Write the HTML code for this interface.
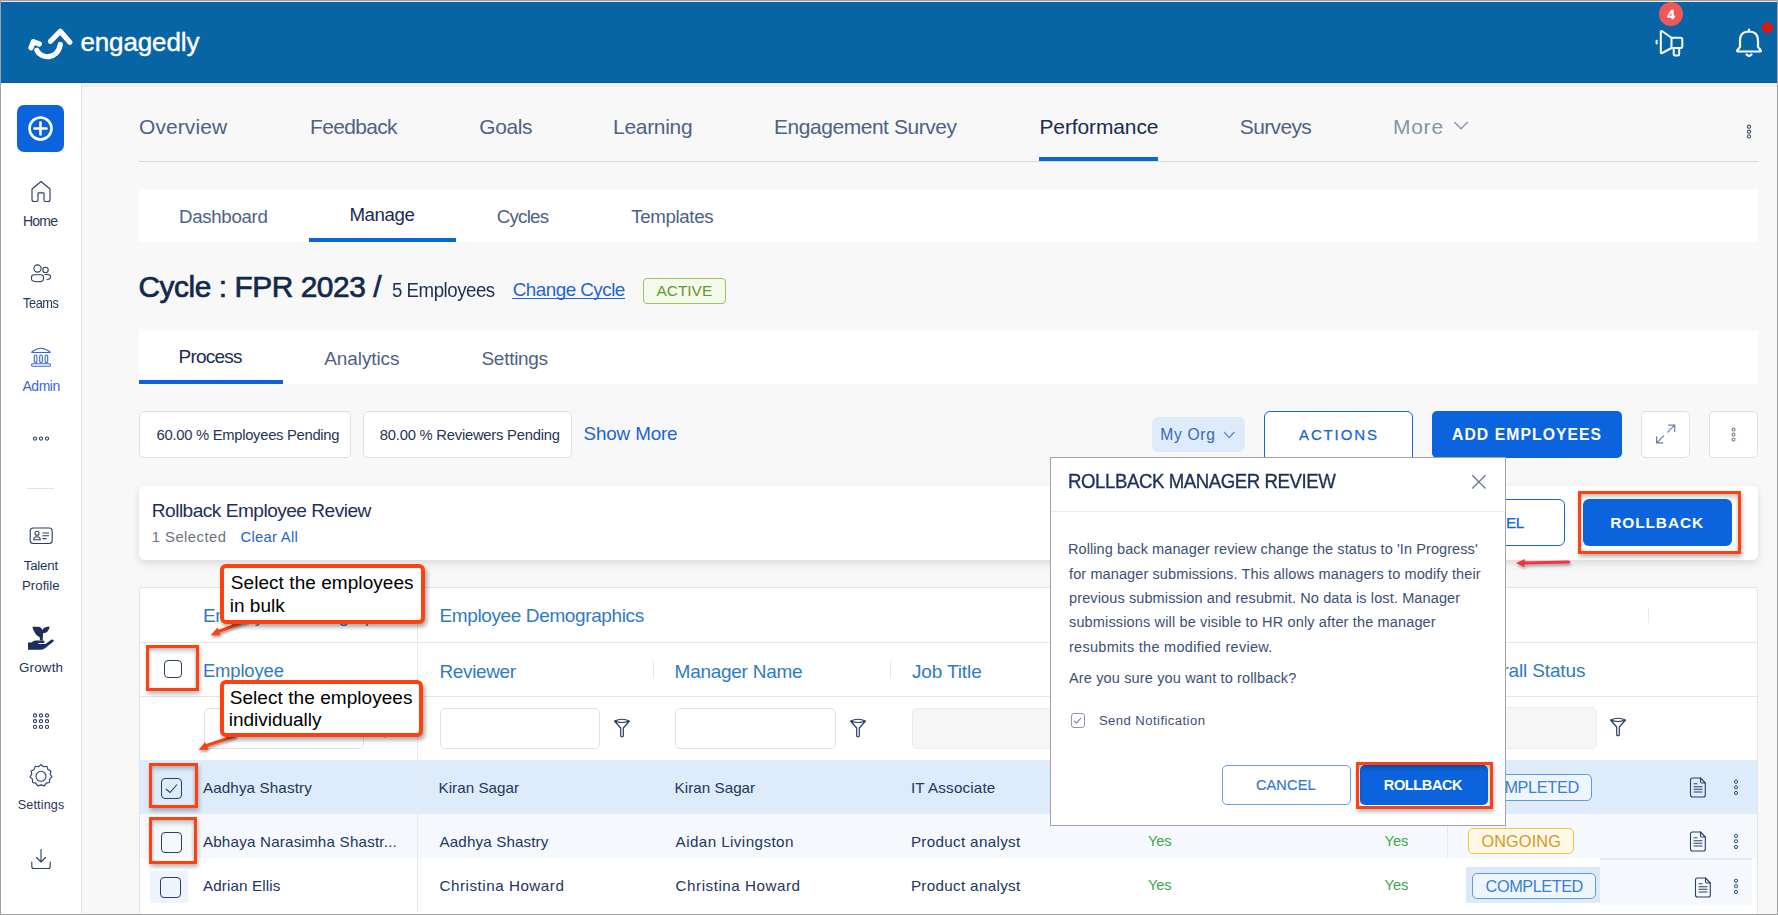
<!DOCTYPE html>
<html><head><meta charset="utf-8"><style>
html,body{margin:0;padding:0;width:1778px;height:915px;overflow:hidden;background:#f8f8f8;}
body{position:relative;font-family:"Liberation Sans", sans-serif;}
.t{position:absolute;white-space:nowrap;font-family:"Liberation Sans", sans-serif;}
</style></head><body>
<div style="position:absolute;left:0px;top:0px;width:1778px;height:915px;box-sizing:border-box;background:#f8f8f8;"></div><div style="position:absolute;left:0px;top:0px;width:1778px;height:83px;box-sizing:border-box;background:#0865a5;"></div><div style="position:absolute;left:0px;top:82px;width:1778px;height:1px;box-sizing:border-box;background:#08599a;"></div><div style="position:absolute;left:0px;top:83px;width:82px;height:832px;box-sizing:border-box;background:#fff;border-right:1px solid #e4e4e4;"></div><div style="position:absolute;left:82px;top:83px;width:1696px;height:1px;box-sizing:border-box;background:#f7f5f0;"></div><div style="position:absolute;left:82px;top:84px;width:1696px;height:3px;box-sizing:border-box;background:#eceeee;"></div><svg style="position:absolute;left:0;top:0" width="100" height="83" viewBox="0 0 100 83">
<g fill="none" stroke="#fff" stroke-width="5.2" stroke-linecap="round" stroke-linejoin="round">
<path d="M50.5 41.3 L60.3 31.3 L69.8 42.2"/>
<path d="M36.8 50.3 C40.5 59 57.5 60.5 60.3 44.5"/>
<path d="M31 47.8 L33.3 41.8 L39.3 44"/>
</g></svg><svg style="position:absolute;left:1650px;top:25px" width="40" height="36" viewBox="0 0 40 36">
<g fill="none" stroke="#fff" stroke-width="2" stroke-linecap="round" stroke-linejoin="round">
<path d="M10.8 7 L10.8 27.2 Q10.8 28.8 12.2 28 L21.5 23 L21.5 12.8 L12.2 6.2 Q10.8 5.4 10.8 7 Z"/>
<path d="M21.5 12.8 L30.5 12.8 Q32.3 12.8 32.3 14.6 L32.3 21.2 Q32.3 23 30.5 23 L21.5 23"/>
<path d="M23.7 23 L23.7 29.3 Q23.7 30.6 25.2 30.6 L27.7 30.6 Q29.2 30.6 29.2 29.3 L29.2 23"/>
<path d="M6.6 15.8 L6.6 18.6"/>
</g></svg><div style="position:absolute;left:1659px;top:2px;width:24px;height:24px;border-radius:50%;background:#f05858;"></div><svg style="position:absolute;left:1732px;top:26px" width="34" height="34" viewBox="0 0 34 34">
<g fill="none" stroke="#fff" stroke-width="2.2" stroke-linecap="round" stroke-linejoin="round">
<path d="M17 3.5 L17 5.5"/>
<path d="M8 21 L8 14.5 Q8 5.5 17 5.5 Q26 5.5 26 14.5 L26 21 L28.5 24 Q29.5 25.5 28 25.5 L6 25.5 Q4.5 25.5 5.5 24 Z"/>
<path d="M14.5 28.5 Q17 31 19.5 28.5"/>
</g></svg><div style="position:absolute;left:1761.5px;top:21.8px;width:11px;height:11px;border-radius:50%;background:#e3160b;"></div><div style="position:absolute;left:17px;top:105px;width:47px;height:47px;box-sizing:border-box;background:#0b64dd;border-radius:7px;"></div><svg style="position:absolute;left:17px;top:105px" width="47" height="47" viewBox="0 0 47 47">
<g fill="none" stroke="#fff" stroke-width="2.6" stroke-linecap="round"><circle cx="23.5" cy="23.5" r="11"/><path d="M23.5 17.5 V29.5 M17.5 23.5 H29.5"/></g></svg><svg style="position:absolute;left:28px;top:178px" width="26" height="26" viewBox="0 0 26 26">
<path d="M4 11 L13 3.5 L22 11 L22 21.5 Q22 23.5 20 23.5 L17.5 23.5 Q16 23.5 16 22 L16 15.5 Q16 14.8 15.3 14.8 L10.7 14.8 Q10 14.8 10 15.5 L10 22 Q10 23.5 8.5 23.5 L6 23.5 Q4 23.5 4 21.5 Z" fill="none" stroke="#2a3f63" stroke-width="1.15" stroke-linejoin="round"/></svg><svg style="position:absolute;left:28px;top:262px" width="26" height="24" viewBox="0 0 26 24">
<g fill="none" stroke="#2a3f63" stroke-width="1.1"><circle cx="9.5" cy="6.5" r="3.6"/><circle cx="17.5" cy="8" r="2.7"/>
<path d="M6 12.8 L13 12.8 Q15.5 12.8 15.5 15.5 L15.5 17 Q15.5 19.8 10 19.8 Q3.5 19.8 3.5 17 L3.5 15.5 Q3.5 12.8 6 12.8 Z"/>
<path d="M16.5 12.5 L20 12.5 Q22.5 12.5 22.5 14.8 Q22.5 17.3 18.5 17.8"/></g></svg><svg style="position:absolute;left:28px;top:344px" width="26" height="26" viewBox="0 0 26 26">
<g fill="none" stroke="#3a66d8" stroke-width="1.1" stroke-linejoin="round"><path d="M3.8 8 Q13 0.5 22.2 8 L22.2 8.5 L3.8 8.5 Z"/>
<rect x="6.3" y="11" width="2.6" height="7.5" rx="1.3"/><rect x="11.7" y="11" width="2.6" height="7.5" rx="1.3"/><rect x="17.1" y="11" width="2.6" height="7.5" rx="1.3"/>
<rect x="3.5" y="19.8" width="19" height="2.4" rx="1.2"/></g></svg><svg style="position:absolute;left:30px;top:432px" width="22" height="14" viewBox="0 0 22 14">
<g fill="none" stroke="#2a3f63" stroke-width="1.1"><circle cx="5" cy="6.6" r="1.6"/><circle cx="11" cy="6.6" r="1.6"/><circle cx="17" cy="6.6" r="1.6"/></g></svg><div style="position:absolute;left:27px;top:488px;width:27px;height:1px;box-sizing:border-box;background:#e2e2e2;"></div><svg style="position:absolute;left:28px;top:524px" width="26" height="24" viewBox="0 0 26 24">
<g fill="none" stroke="#2a3f63" stroke-width="1.1"><rect x="2.2" y="4" width="22" height="15.5" rx="3"/>
<circle cx="9" cy="9.3" r="2"/><path d="M5.8 15.8 Q5.8 12.8 9 12.8 Q12.2 12.8 12.2 15.8 Z"/>
<path d="M14.5 9 H21 M14.5 11.8 H21 M14.5 14.6 H18.5"/></g></svg><svg style="position:absolute;left:26px;top:624px" width="30" height="28" viewBox="0 0 30 28">
<g fill="#1b2f5a"><path d="M6.3 2.8 L12 2.8 Q16.8 3.5 16.8 8.5 L16.8 14 Q9 13.5 6.3 2.8 Z"/><path d="M15.5 9.5 Q15.5 2.8 23.6 2.6 Q23.2 9.3 15.5 9.5 Z"/><rect x="13.8" y="8" width="3" height="8.5" rx="1"/>
<path d="M2 18.5 L2 25.8 L14.5 25.8 Q17 25.8 19 24.3 L27.5 17.5 Q28.5 16.3 27 15.8 Q25.5 15.3 24.5 16.2 L19.5 20 L12.5 20 L12.5 19 L17.2 19 Q18.5 19 18.5 17.7 Q18.5 16.5 17.2 16.5 L9.5 16.5 Q7.5 16.5 6 18 L5.2 18.5 Z"/></g></svg><svg style="position:absolute;left:30px;top:710px" width="22" height="22" viewBox="0 0 22 22">
<g fill="none" stroke="#2a3f63" stroke-width="1.1"><circle cx="5" cy="5.5" r="1.6"/><circle cx="11" cy="5.5" r="1.6"/><circle cx="17" cy="5.5" r="1.6"/>
<circle cx="5" cy="11.2" r="1.6"/><circle cx="11" cy="11.2" r="1.6"/><circle cx="17" cy="11.2" r="1.6"/>
<circle cx="5" cy="16.9" r="1.6"/><circle cx="11" cy="16.9" r="1.6"/><circle cx="17" cy="16.9" r="1.6"/></g></svg><svg style="position:absolute;left:27px;top:762px" width="28" height="28" viewBox="0 0 28 28">
<g fill="none" stroke="#2a3f63" stroke-width="1.1" stroke-linejoin="round">
<path d="M14 2.6 L16.6 4.7 L19.9 4.3 L20.9 7.4 L23.9 8.9 L23.2 12.2 L25 14.9 L22.6 17.1 L22.5 20.5 L19.2 21.1 L17.3 23.9 L14 22.9 L10.7 23.9 L8.8 21.1 L5.5 20.5 L5.4 17.1 L3 14.9 L4.8 12.2 L4.1 8.9 L7.1 7.4 L8.1 4.3 L11.4 4.7 Z"/>
<circle cx="14" cy="14.3" r="5"/></g></svg><svg style="position:absolute;left:28px;top:846px" width="26" height="26" viewBox="0 0 26 26">
<g fill="none" stroke="#2a3f63" stroke-width="1.1" stroke-linecap="round" stroke-linejoin="round">
<path d="M13 3.5 V16 M8.5 11.5 L13 16 L17.5 11.5"/><path d="M3.8 16 V20.5 Q3.8 22.5 5.8 22.5 H20.2 Q22.2 22.5 22.2 20.5 V16"/></g></svg><svg style="position:absolute;left:1450px;top:117px" width="22" height="16" viewBox="0 0 22 16"><path d="M4.3 5 L11 11.8 L17.7 5" fill="none" stroke="#8594ad" stroke-width="1.3"/></svg><div style="position:absolute;left:139px;top:161px;width:1620px;height:1px;box-sizing:border-box;background:#d9d9d9;"></div><div style="position:absolute;left:1039px;top:157px;width:119px;height:4px;box-sizing:border-box;background:#0b64dd;"></div><svg style="position:absolute;left:1742px;top:120px" width="14" height="22" viewBox="0 0 14 22"><g fill="none" stroke="#3b4e70" stroke-width="1.1">
<circle cx="7" cy="6.7" r="1.6"/><circle cx="7" cy="11.7" r="1.6"/><circle cx="7" cy="16.4" r="1.6"/></g></svg><div style="position:absolute;left:139px;top:189px;width:1619px;height:53px;box-sizing:border-box;background:#fff;"></div><div style="position:absolute;left:309px;top:238px;width:147px;height:4px;box-sizing:border-box;background:#0b64dd;"></div><div style="position:absolute;left:512px;top:297.5px;width:113px;height:1.5px;box-sizing:border-box;background:#1f63d9;"></div><div style="position:absolute;left:643px;top:278px;width:83px;height:26px;box-sizing:border-box;background:#f5f9ec;border:1px solid #96c75e;border-radius:4px;"></div><div style="position:absolute;left:139px;top:331px;width:1619px;height:53px;box-sizing:border-box;background:#fff;"></div><div style="position:absolute;left:139px;top:380px;width:144px;height:4px;box-sizing:border-box;background:#0b64dd;"></div><div style="position:absolute;left:139px;top:411px;width:212px;height:47px;box-sizing:border-box;background:#fff;border:1px solid #e1e1e1;border-radius:5px;"></div><div style="position:absolute;left:363px;top:411px;width:209px;height:47px;box-sizing:border-box;background:#fff;border:1px solid #e1e1e1;border-radius:5px;"></div><div style="position:absolute;left:1152px;top:417px;width:93px;height:35px;box-sizing:border-box;background:#deebfb;border-radius:6px;"></div><svg style="position:absolute;left:1220px;top:427px" width="18" height="16" viewBox="0 0 18 16"><path d="M4 5 L9.2 10.6 L14.4 5" fill="none" stroke="#5a85c0" stroke-width="1.2"/></svg><div style="position:absolute;left:1264px;top:411px;width:149px;height:59px;box-sizing:border-box;background:#fff;border:1.5px solid #1a62d8;border-radius:6px;"></div><div style="position:absolute;left:1432px;top:411px;width:190px;height:47px;box-sizing:border-box;background:#0b64dd;border-radius:5px;"></div><div style="position:absolute;left:1641px;top:411px;width:49px;height:47px;box-sizing:border-box;background:#fff;border:1px solid #e1e1e1;border-radius:5px;"></div><svg style="position:absolute;left:1641px;top:411px" width="49" height="47" viewBox="0 0 49 47"><g fill="none" stroke="#6c7f9c" stroke-width="1.2" stroke-linecap="round">
<path d="M26.7 21.2 L33.7 14.2 M27.5 14.2 H33.7 V20.4 M15.6 31.9 L22.7 24.8 M15.6 25.7 V31.9 H21.8"/></g></svg><div style="position:absolute;left:1709px;top:411px;width:49px;height:47px;box-sizing:border-box;background:#fff;border:1px solid #e1e1e1;border-radius:5px;"></div><svg style="position:absolute;left:1709px;top:411px" width="49" height="47" viewBox="0 0 49 47"><g fill="none" stroke="#6c7f9c" stroke-width="1.1">
<circle cx="24.5" cy="18.5" r="1.5"/><circle cx="24.5" cy="23.5" r="1.5"/><circle cx="24.5" cy="28.5" r="1.5"/></g></svg><div style="position:absolute;left:139px;top:486px;width:1619px;height:74px;box-sizing:border-box;background:#fff;border-radius:6px;box-shadow:0 3px 8px rgba(0,0,0,0.13);"></div><div style="position:absolute;left:1440px;top:499px;width:125px;height:47px;box-sizing:border-box;background:#fff;border:1.5px solid #1a62d8;border-radius:6px;"></div><div style="position:absolute;left:1583px;top:499px;width:149px;height:47px;box-sizing:border-box;background:#0b64dd;border-radius:6px;"></div><div style="position:absolute;left:1578px;top:491px;width:163px;height:63px;box-sizing:border-box;border:3px solid #fb4210;box-shadow:inset 0 4px 4px -1px rgba(0,0,0,0.22), inset 2px 0 3px -1px rgba(0,0,0,0.12), inset -2px 0 3px -1px rgba(0,0,0,0.12), 1px 3px 4px rgba(0,0,0,0.28);"></div><svg style="position:absolute;left:1505px;top:550px" width="80" height="25" viewBox="0 0 80 25"><g style="filter:drop-shadow(1px 2px 1.5px rgba(0,0,0,0.35))">
<path d="M63.5 12 L16 13" stroke="#f53538" stroke-width="3.2" stroke-linecap="round"/>
<path d="M11 13.1 L20 9 L19 17 Z" fill="#f53538"/></g></svg><div style="position:absolute;left:139px;top:587px;width:1619px;height:353px;box-sizing:border-box;background:#fff;border:1px solid #e4e4e4;border-radius:3px;"></div><div style="position:absolute;left:140px;top:642px;width:1617px;height:1px;box-sizing:border-box;background:#e6e6e6;"></div><div style="position:absolute;left:140px;top:696px;width:1617px;height:1px;box-sizing:border-box;background:#e6e6e6;"></div><div style="position:absolute;left:417px;top:587px;width:1px;height:325px;box-sizing:border-box;background:#ebebeb;"></div><div style="position:absolute;left:653px;top:661px;width:1px;height:17px;box-sizing:border-box;background:#e8e8e8;"></div><div style="position:absolute;left:890px;top:661px;width:1px;height:17px;box-sizing:border-box;background:#e8e8e8;"></div><div style="position:absolute;left:1648px;top:608px;width:1px;height:15px;box-sizing:border-box;background:#e8e8e8;"></div><div style="position:absolute;left:204px;top:707.5px;width:160px;height:41.0px;box-sizing:border-box;background:#fff;border:1px solid #e3e3e3;border-radius:5px;"></div><div style="position:absolute;left:439.5px;top:707.5px;width:160.0px;height:41.0px;box-sizing:border-box;background:#fff;border:1px solid #e3e3e3;border-radius:5px;"></div><div style="position:absolute;left:675px;top:707.5px;width:161px;height:41.0px;box-sizing:border-box;background:#fff;border:1px solid #e3e3e3;border-radius:5px;"></div><div style="position:absolute;left:912px;top:707.5px;width:188px;height:41.0px;box-sizing:border-box;background:#f6f6f6;border:1px solid #ececec;border-radius:5px;"></div><div style="position:absolute;left:1400px;top:706.5px;width:197px;height:42.5px;box-sizing:border-box;background:#f6f6f6;border:1px solid #ececec;border-radius:5px;"></div><svg style="position:absolute;left:612px;top:717px" width="20" height="22" viewBox="0 0 20 22"><path d="M2.5 4 Q10 0.5 17.5 4 L11.3 11 L11.3 19 Q10 20.5 8.7 19 L8.7 11 Z M2.5 4 Q10 7 17.5 4" fill="none" stroke="#2a3f63" stroke-width="1.2" stroke-linejoin="round"/></svg><svg style="position:absolute;left:848px;top:717px" width="20" height="22" viewBox="0 0 20 22"><path d="M2.5 4 Q10 0.5 17.5 4 L11.3 11 L11.3 19 Q10 20.5 8.7 19 L8.7 11 Z M2.5 4 Q10 7 17.5 4" fill="none" stroke="#2a3f63" stroke-width="1.2" stroke-linejoin="round"/></svg><svg style="position:absolute;left:1608px;top:716px" width="20" height="22" viewBox="0 0 20 22"><path d="M2.5 4 Q10 0.5 17.5 4 L11.3 11 L11.3 19 Q10 20.5 8.7 19 L8.7 11 Z M2.5 4 Q10 7 17.5 4" fill="none" stroke="#2a3f63" stroke-width="1.2" stroke-linejoin="round"/></svg><svg style="position:absolute;left:375px;top:717px" width="20" height="22" viewBox="0 0 20 22"><path d="M2.5 4 Q10 0.5 17.5 4 L11.3 11 L11.3 19 Q10 20.5 8.7 19 L8.7 11 Z M2.5 4 Q10 7 17.5 4" fill="none" stroke="#2a3f63" stroke-width="1.2" stroke-linejoin="round"/></svg><div style="position:absolute;left:140px;top:759.5px;width:1617px;height:54.0px;box-sizing:border-box;background:#deebfb;"></div><div style="position:absolute;left:140px;top:813.5px;width:1617px;height:44.5px;box-sizing:border-box;background:#f5f9fe;"></div><div style="position:absolute;left:1600px;top:858px;width:152px;height:2px;box-sizing:border-box;background:#dfe9f7;"></div><div style="position:absolute;left:1600px;top:860px;width:152px;height:45px;box-sizing:border-box;background:#f6f9fe;"></div><div style="position:absolute;left:417px;top:759px;width:1px;height:153px;box-sizing:border-box;background:#e6e9ee;"></div><div style="position:absolute;left:1447px;top:813.5px;width:1px;height:44.5px;box-sizing:border-box;background:#e6e9ee;"></div><div style="position:absolute;left:164px;top:659.5px;width:18px;height:18px;box-sizing:border-box;border:1.1px solid #2d3e5e;border-radius:4px;"></div><div style="position:absolute;left:161px;top:778px;width:21px;height:21px;box-sizing:border-box;border:1.1px solid #2d3e5e;border-radius:4px;"></div><svg style="position:absolute;left:161px;top:778px" width="21" height="21" viewBox="0 0 21 21"><path d="M5 11 L9 14.5 L16 6.5" fill="none" stroke="#2d3e5e" stroke-width="1.1"/></svg><div style="position:absolute;left:161px;top:832px;width:21px;height:21px;box-sizing:border-box;border:1.1px solid #2d3e5e;border-radius:4px;"></div><div style="position:absolute;left:150px;top:871px;width:38px;height:32px;box-sizing:border-box;background:#eef4fd;"></div><div style="position:absolute;left:160px;top:877px;width:21px;height:21px;box-sizing:border-box;border:1.1px solid #2d3e5e;border-radius:4px;"></div><div style="position:absolute;left:1400px;top:774.4px;width:192px;height:26.200000000000045px;box-sizing:border-box;background:#eef5fe;border:1px solid #5b9be5;border-radius:5px;"></div><div style="position:absolute;left:1468px;top:828.2px;width:106px;height:26.199999999999932px;box-sizing:border-box;background:#fff8e6;border:1px solid #f2c24a;border-radius:5px;"></div><div style="position:absolute;left:1466px;top:867px;width:134px;height:36px;box-sizing:border-box;background:#dde9f8;"></div><div style="position:absolute;left:1472px;top:873.3px;width:124px;height:26.200000000000045px;box-sizing:border-box;background:#eef5fe;border:1px solid #5b9be5;border-radius:5px;"></div><svg style="position:absolute;left:1688px;top:775.5px" width="20" height="23" viewBox="0 0 20 23"><g fill="none" stroke="#2a3f63" stroke-width="1.1" stroke-linejoin="round" stroke-linecap="round">
<path d="M2.5 4 Q2.5 2 4.5 2 L12.5 2 L17.3 7 L17.3 19 Q17.3 21 15.3 21 L4.5 21 Q2.5 21 2.5 19 Z"/><path d="M12.5 2 L12.5 5.5 Q12.5 7 14 7 L17.3 7"/>
<path d="M6 7.8 H9 M6 10.8 H14 M6 13.3 H14 M6 16 H14"/></g></svg><svg style="position:absolute;left:1688px;top:829.5px" width="20" height="23" viewBox="0 0 20 23"><g fill="none" stroke="#2a3f63" stroke-width="1.1" stroke-linejoin="round" stroke-linecap="round">
<path d="M2.5 4 Q2.5 2 4.5 2 L12.5 2 L17.3 7 L17.3 19 Q17.3 21 15.3 21 L4.5 21 Q2.5 21 2.5 19 Z"/><path d="M12.5 2 L12.5 5.5 Q12.5 7 14 7 L17.3 7"/>
<path d="M6 7.8 H9 M6 10.8 H14 M6 13.3 H14 M6 16 H14"/></g></svg><svg style="position:absolute;left:1692.5px;top:875.5px" width="20" height="23" viewBox="0 0 20 23"><g fill="none" stroke="#2a3f63" stroke-width="1.1" stroke-linejoin="round" stroke-linecap="round">
<path d="M2.5 4 Q2.5 2 4.5 2 L12.5 2 L17.3 7 L17.3 19 Q17.3 21 15.3 21 L4.5 21 Q2.5 21 2.5 19 Z"/><path d="M12.5 2 L12.5 5.5 Q12.5 7 14 7 L17.3 7"/>
<path d="M6 7.8 H9 M6 10.8 H14 M6 13.3 H14 M6 16 H14"/></g></svg><svg style="position:absolute;left:1729px;top:776px" width="14" height="22" viewBox="0 0 14 22"><g fill="none" stroke="#2a3f63" stroke-width="0.95">
<circle cx="7" cy="5.8" r="1.6"/><circle cx="7" cy="11.3" r="1.6"/><circle cx="7" cy="17" r="1.6"/></g></svg><svg style="position:absolute;left:1729px;top:830px" width="14" height="22" viewBox="0 0 14 22"><g fill="none" stroke="#2a3f63" stroke-width="0.95">
<circle cx="7" cy="5.8" r="1.6"/><circle cx="7" cy="11.3" r="1.6"/><circle cx="7" cy="17" r="1.6"/></g></svg><svg style="position:absolute;left:1729px;top:875px" width="14" height="22" viewBox="0 0 14 22"><g fill="none" stroke="#2a3f63" stroke-width="0.95">
<circle cx="7" cy="5.8" r="1.6"/><circle cx="7" cy="11.3" r="1.6"/><circle cx="7" cy="17" r="1.6"/></g></svg><div style="position:absolute;left:220px;top:564px;width:205px;height:60px;box-sizing:border-box;z-index:20;background:#fff;border:4px solid #fb4210;border-radius:6px;box-shadow:2px 3px 4px rgba(0,0,0,0.35);"></div><svg style="position:absolute;left:195px;top:612px;z-index:19" width="70" height="40" viewBox="0 0 70 40"><g style="filter:drop-shadow(1px 2px 1px rgba(0,0,0,0.35))">
<path d="M52 9 L22 20" stroke="#fb4210" stroke-width="3" stroke-linecap="round"/><path d="M15.5 23.5 L22.5 15.5 L25.5 23 Z" fill="#fb4210"/></g></svg><div style="position:absolute;left:220px;top:680px;width:203px;height:57px;box-sizing:border-box;z-index:20;background:#fff;border:4px solid #fb4210;border-radius:6px;box-shadow:2px 3px 4px rgba(0,0,0,0.35);"></div><svg style="position:absolute;left:185px;top:728px;z-index:19" width="70" height="40" viewBox="0 0 70 40"><g style="filter:drop-shadow(1px 2px 1px rgba(0,0,0,0.35))">
<path d="M50 8 L20 18" stroke="#fb4210" stroke-width="3" stroke-linecap="round"/><path d="M13.5 22 L20 14 L23.5 21.5 Z" fill="#fb4210"/></g></svg><div style="position:absolute;left:146px;top:645px;width:53px;height:46px;box-sizing:border-box;border:3.2px solid #fb4210;box-shadow:inset 0 4px 4px -1px rgba(0,0,0,0.22), inset 2px 0 3px -1px rgba(0,0,0,0.12), inset -2px 0 3px -1px rgba(0,0,0,0.12), 1px 3px 4px rgba(0,0,0,0.28);"></div><div style="position:absolute;left:149px;top:763px;width:49px;height:45.299999999999955px;box-sizing:border-box;border:3.2px solid #fb4210;box-shadow:inset 0 4px 4px -1px rgba(0,0,0,0.22), inset 2px 0 3px -1px rgba(0,0,0,0.12), inset -2px 0 3px -1px rgba(0,0,0,0.12), 1px 3px 4px rgba(0,0,0,0.28);"></div><div style="position:absolute;left:149px;top:817px;width:48px;height:46.700000000000045px;box-sizing:border-box;border:3.2px solid #fb4210;box-shadow:inset 0 4px 4px -1px rgba(0,0,0,0.22), inset 2px 0 3px -1px rgba(0,0,0,0.12), inset -2px 0 3px -1px rgba(0,0,0,0.12), 1px 3px 4px rgba(0,0,0,0.28);"></div><div style="position:absolute;left:1050px;top:457px;width:456px;height:369px;box-sizing:border-box;z-index:10;background:#fff;border:1px solid #a3a3a3;"></div><div style="position:absolute;left:1051px;top:511px;width:454px;height:1px;box-sizing:border-box;z-index:11;background:#ebebeb;"></div><svg style="position:absolute;left:1468px;top:471px;z-index:11" width="22" height="22" viewBox="0 0 22 22"><path d="M4.3 4.3 L17.5 17.5 M17.5 4.3 L4.3 17.5" stroke="#6b7a90" stroke-width="1.3"/></svg><div style="position:absolute;left:1070.5px;top:713.2px;width:14.5px;height:14.5px;box-sizing:border-box;border:1.2px solid #8d99ab;border-radius:3px;z-index:11"></div><svg style="position:absolute;left:1070px;top:713px;z-index:11" width="15" height="15" viewBox="0 0 15 15"><path d="M4 7.8 L6.5 10 L11 5" fill="none" stroke="#6b7a90" stroke-width="1.1"/></svg><div style="position:absolute;left:1222px;top:765px;width:129px;height:40px;box-sizing:border-box;z-index:11;background:#fff;border:1px solid #6aa0ea;border-radius:5px;"></div><div style="position:absolute;left:1360px;top:765px;width:128px;height:40px;box-sizing:border-box;z-index:11;background:#0b64dd;border-radius:5px;"></div><div style="position:absolute;left:1356px;top:761.5px;width:137px;height:47.5px;box-sizing:border-box;z-index:12;border:3px solid #fb4210;box-shadow:inset 0 4px 4px -1px rgba(0,0,0,0.22), inset 2px 0 3px -1px rgba(0,0,0,0.12), inset -2px 0 3px -1px rgba(0,0,0,0.12), 1px 3px 4px rgba(0,0,0,0.28);"></div><div style="position:absolute;left:0px;top:0px;width:1778px;height:915px;box-sizing:border-box;z-index:50;border:1px solid #a0a0a0;"></div><div style="position:absolute;left:1px;top:1px;width:1776px;height:1px;box-sizing:border-box;z-index:50;background:#e6e6e6;"></div>
<div class="t" style="left:80.40px;top:30.26px;font-size:25.96px;line-height:25.96px;color:#fff;font-weight:400;letter-spacing:-0.100px;-webkit-text-stroke:0.4px #fff;">engagedly</div>
<div class="t" style="left:1667.20px;top:8.24px;font-size:13.68px;line-height:13.68px;color:#fff;font-weight:700;letter-spacing:0.000px;-webkit-text-stroke:0.3px #fff;">4</div>
<div class="t" style="left:22.90px;top:214.70px;font-size:13.96px;line-height:13.96px;color:#1f3556;font-weight:400;letter-spacing:-0.687px;">Home</div>
<div class="t" style="left:22.90px;top:296.70px;font-size:13.96px;line-height:13.96px;color:#1f3556;font-weight:400;letter-spacing:-0.500px;transform:scaleX(0.9203);transform-origin:0 0;">Teams</div>
<div class="t" style="left:22.50px;top:379.80px;font-size:13.96px;line-height:13.96px;color:#3a66d8;font-weight:400;letter-spacing:-0.447px;">Admin</div>
<div class="t" style="left:23.70px;top:559.20px;font-size:13.26px;line-height:13.26px;color:#1f3556;font-weight:400;letter-spacing:-0.175px;">Talent</div>
<div class="t" style="left:22.00px;top:579.00px;font-size:13.26px;line-height:13.26px;color:#1f3556;font-weight:400;letter-spacing:0.002px;">Profile</div>
<div class="t" style="left:18.90px;top:661.08px;font-size:13.4px;line-height:13.4px;color:#1f3556;font-weight:400;letter-spacing:0.197px;">Growth</div>
<div class="t" style="left:17.80px;top:799.49px;font-size:12.56px;line-height:12.56px;color:#1f3556;font-weight:400;letter-spacing:0.163px;">Settings</div>
<div class="t" style="left:139.00px;top:117.01px;font-size:20.94px;line-height:20.94px;color:#4e6283;font-weight:400;letter-spacing:0.123px;">Overview</div>
<div class="t" style="left:310.00px;top:117.01px;font-size:20.94px;line-height:20.94px;color:#4e6283;font-weight:400;letter-spacing:-0.640px;">Feedback</div>
<div class="t" style="left:479.30px;top:117.01px;font-size:20.94px;line-height:20.94px;color:#4e6283;font-weight:400;letter-spacing:-0.407px;">Goals</div>
<div class="t" style="left:613.00px;top:117.01px;font-size:20.94px;line-height:20.94px;color:#4e6283;font-weight:400;letter-spacing:-0.264px;">Learning</div>
<div class="t" style="left:774.00px;top:117.01px;font-size:20.94px;line-height:20.94px;color:#4e6283;font-weight:400;letter-spacing:-0.422px;">Engagement Survey</div>
<div class="t" style="left:1039.50px;top:117.01px;font-size:20.94px;line-height:20.94px;color:#1b2c4f;font-weight:400;letter-spacing:-0.091px;">Performance</div>
<div class="t" style="left:1239.80px;top:117.01px;font-size:20.94px;line-height:20.94px;color:#4e6283;font-weight:400;letter-spacing:-0.611px;">Surveys</div>
<div class="t" style="left:1392.90px;top:117.01px;font-size:20.94px;line-height:20.94px;color:#8594ad;font-weight:400;letter-spacing:0.814px;">More</div>
<div class="t" style="left:179.00px;top:207.80px;font-size:18.7px;line-height:18.7px;color:#4e6283;font-weight:400;letter-spacing:-0.328px;">Dashboard</div>
<div class="t" style="left:349.50px;top:206.20px;font-size:18.7px;line-height:18.7px;color:#1b2c4f;font-weight:400;letter-spacing:-0.448px;">Manage</div>
<div class="t" style="left:496.80px;top:207.70px;font-size:18.7px;line-height:18.7px;color:#4e6283;font-weight:400;letter-spacing:-0.766px;">Cycles</div>
<div class="t" style="left:631.30px;top:207.70px;font-size:18.7px;line-height:18.7px;color:#4e6283;font-weight:400;letter-spacing:-0.366px;">Templates</div>
<div class="t" style="left:138.40px;top:271.66px;font-size:29.87px;line-height:29.87px;color:#13294b;font-weight:400;letter-spacing:-0.440px;-webkit-text-stroke:0.7px #13294b;">Cycle : FPR 2023 /</div>
<div class="t" style="left:391.80px;top:281.19px;font-size:19.54px;line-height:19.54px;color:#1c2f55;font-weight:400;letter-spacing:-0.500px;transform:scaleX(0.9562);transform-origin:0 0;">5 Employees</div>
<div class="t" style="left:512.80px;top:281.48px;font-size:18.84px;line-height:18.84px;color:#1f63d9;font-weight:400;letter-spacing:-0.527px;">Change Cycle</div>
<div class="t" style="left:656.50px;top:283.26px;font-size:15.43px;line-height:15.43px;color:#5f9a2e;font-weight:400;letter-spacing:-0.003px;">ACTIVE</div>
<div class="t" style="left:178.50px;top:347.26px;font-size:18.98px;line-height:18.98px;color:#1b2c4f;font-weight:400;letter-spacing:-0.773px;">Process</div>
<div class="t" style="left:324.30px;top:348.86px;font-size:18.98px;line-height:18.98px;color:#4e6283;font-weight:400;letter-spacing:-0.090px;">Analytics</div>
<div class="t" style="left:481.50px;top:348.86px;font-size:18.98px;line-height:18.98px;color:#4e6283;font-weight:400;letter-spacing:-0.279px;">Settings</div>
<div class="t" style="left:156.60px;top:428.10px;font-size:14.79px;line-height:14.79px;color:#1f3556;font-weight:400;letter-spacing:-0.287px;">60.00 % Employees Pending</div>
<div class="t" style="left:379.80px;top:428.00px;font-size:14.79px;line-height:14.79px;color:#1f3556;font-weight:400;letter-spacing:-0.232px;">80.00 % Reviewers Pending</div>
<div class="t" style="left:583.60px;top:425.48px;font-size:18.84px;line-height:18.84px;color:#1d64d8;font-weight:400;letter-spacing:-0.157px;">Show More</div>
<div class="t" style="left:1160.20px;top:427.09px;font-size:15.63px;line-height:15.63px;color:#3a69ad;font-weight:400;letter-spacing:0.695px;">My Org</div>
<div class="t" style="left:1299.00px;top:427.22px;font-size:15.0px;line-height:15.0px;color:#1a62d8;font-weight:400;letter-spacing:1.872px;-webkit-text-stroke:0.25px #1a62d8;">ACTIONS</div>
<div class="t" style="left:1452.00px;top:426.53px;font-size:15.71px;line-height:15.71px;color:#fff;font-weight:700;letter-spacing:1.080px;">ADD EMPLOYEES</div>
<div class="t" style="left:151.80px;top:501.34px;font-size:19.12px;line-height:19.12px;color:#1c2f55;font-weight:400;letter-spacing:-0.523px;">Rollback Employee Review</div>
<div class="t" style="left:151.80px;top:530.00px;font-size:14.79px;line-height:14.79px;color:#6c7280;font-weight:400;letter-spacing:0.475px;">1 Selected</div>
<div class="t" style="left:240.60px;top:530.00px;font-size:14.79px;line-height:14.79px;color:#1f63d9;font-weight:400;letter-spacing:0.266px;">Clear All</div>
<div class="t" style="left:1506.00px;top:514.96px;font-size:15.43px;line-height:15.43px;color:#1a62d8;font-weight:400;letter-spacing:-0.486px;-webkit-text-stroke:0.25px #1a62d8;">EL</div>
<div class="t" style="left:1610.20px;top:514.96px;font-size:15.43px;line-height:15.43px;color:#fff;font-weight:700;letter-spacing:0.916px;">ROLLBACK</div>
<div class="t" style="left:202.90px;top:606.36px;font-size:18.98px;line-height:18.98px;color:#2f7bc4;font-weight:400;letter-spacing:-0.362px;">Employee Demographics</div>
<div class="t" style="left:439.50px;top:606.46px;font-size:18.98px;line-height:18.98px;color:#2f7bc4;font-weight:400;letter-spacing:-0.362px;">Employee Demographics</div>
<div class="t" style="left:202.90px;top:662.14px;font-size:18.42px;line-height:18.42px;color:#2f7bc4;font-weight:400;letter-spacing:-0.116px;">Employee</div>
<div class="t" style="left:439.50px;top:661.56px;font-size:18.98px;line-height:18.98px;color:#2f7bc4;font-weight:400;letter-spacing:-0.349px;">Reviewer</div>
<div class="t" style="left:674.60px;top:661.56px;font-size:18.98px;line-height:18.98px;color:#2f7bc4;font-weight:400;letter-spacing:-0.253px;">Manager Name</div>
<div class="t" style="left:911.90px;top:661.56px;font-size:18.98px;line-height:18.98px;color:#2f7bc4;font-weight:400;letter-spacing:-0.104px;">Job Title</div>
<div class="t" style="left:1502.40px;top:661.06px;font-size:18.98px;line-height:18.98px;color:#2f7bc4;font-weight:400;letter-spacing:-0.136px;">rall Status</div>
<div class="t" style="left:202.90px;top:780.45px;font-size:15.21px;line-height:15.21px;color:#24365b;font-weight:400;letter-spacing:0.121px;">Aadhya Shastry</div>
<div class="t" style="left:438.50px;top:780.45px;font-size:15.21px;line-height:15.21px;color:#24365b;font-weight:400;letter-spacing:0.028px;">Kiran Sagar</div>
<div class="t" style="left:674.60px;top:780.45px;font-size:15.21px;line-height:15.21px;color:#24365b;font-weight:400;letter-spacing:0.028px;">Kiran Sagar</div>
<div class="t" style="left:910.90px;top:780.45px;font-size:15.21px;line-height:15.21px;color:#24365b;font-weight:400;letter-spacing:0.173px;">IT Associate</div>
<div class="t" style="left:202.90px;top:833.85px;font-size:15.21px;line-height:15.21px;color:#24365b;font-weight:400;letter-spacing:0.185px;">Abhaya Narasimha Shastr...</div>
<div class="t" style="left:439.50px;top:833.85px;font-size:15.21px;line-height:15.21px;color:#24365b;font-weight:400;letter-spacing:0.121px;">Aadhya Shastry</div>
<div class="t" style="left:675.60px;top:833.85px;font-size:15.21px;line-height:15.21px;color:#24365b;font-weight:400;letter-spacing:0.413px;">Aidan Livingston</div>
<div class="t" style="left:910.90px;top:833.85px;font-size:15.21px;line-height:15.21px;color:#24365b;font-weight:400;letter-spacing:0.324px;">Product analyst</div>
<div class="t" style="left:202.90px;top:877.75px;font-size:15.21px;line-height:15.21px;color:#24365b;font-weight:400;letter-spacing:0.123px;">Adrian Ellis</div>
<div class="t" style="left:439.50px;top:877.75px;font-size:15.21px;line-height:15.21px;color:#24365b;font-weight:400;letter-spacing:0.517px;">Christina Howard</div>
<div class="t" style="left:675.60px;top:877.75px;font-size:15.21px;line-height:15.21px;color:#24365b;font-weight:400;letter-spacing:0.517px;">Christina Howard</div>
<div class="t" style="left:910.90px;top:877.75px;font-size:15.21px;line-height:15.21px;color:#24365b;font-weight:400;letter-spacing:0.324px;">Product analyst</div>
<div class="t" style="left:1148.00px;top:833.92px;font-size:14.65px;line-height:14.65px;color:#3aa84a;font-weight:400;letter-spacing:-0.131px;">Yes</div>
<div class="t" style="left:1384.50px;top:833.92px;font-size:14.65px;line-height:14.65px;color:#3aa84a;font-weight:400;letter-spacing:-0.031px;">Yes</div>
<div class="t" style="left:1148.00px;top:878.22px;font-size:14.65px;line-height:14.65px;color:#3aa84a;font-weight:400;letter-spacing:-0.131px;">Yes</div>
<div class="t" style="left:1384.50px;top:878.22px;font-size:14.65px;line-height:14.65px;color:#3aa84a;font-weight:400;letter-spacing:-0.031px;">Yes</div>
<div class="t" style="left:1504.40px;top:779.13px;font-size:16.29px;line-height:16.29px;color:#3a7fd5;font-weight:400;letter-spacing:-0.357px;">MPLETED</div>
<div class="t" style="left:1481.40px;top:833.43px;font-size:16.29px;line-height:16.29px;color:#d99a1a;font-weight:400;letter-spacing:0.128px;">ONGOING</div>
<div class="t" style="left:1485.60px;top:877.93px;font-size:16.29px;line-height:16.29px;color:#3a7fd5;font-weight:400;letter-spacing:-0.445px;">COMPLETED</div>
<div class="t" style="left:230.80px;top:573.35px;font-size:18.99px;line-height:18.99px;color:#000;font-weight:400;letter-spacing:0.067px;z-index:21;">Select the employees</div>
<div class="t" style="left:229.80px;top:595.55px;font-size:18.99px;line-height:18.99px;color:#000;font-weight:400;letter-spacing:0.000px;z-index:21;">in bulk</div>
<div class="t" style="left:229.70px;top:687.85px;font-size:18.99px;line-height:18.99px;color:#000;font-weight:400;letter-spacing:0.067px;z-index:21;">Select the employees</div>
<div class="t" style="left:228.70px;top:709.65px;font-size:18.99px;line-height:18.99px;color:#000;font-weight:400;letter-spacing:0.000px;z-index:21;">individually</div>
<div class="t" style="left:1068.31px;top:470.15px;font-size:21.0px;line-height:21.0px;color:#1c3157;font-weight:400;letter-spacing:-0.500px;transform:scaleX(0.8876);transform-origin:0 0;z-index:11;-webkit-text-stroke:0.35px #1c3157;">ROLLBACK MANAGER REVIEW</div>
<div class="t" style="left:1068.00px;top:541.83px;font-size:14.52px;line-height:14.52px;color:#3d5073;font-weight:400;letter-spacing:0.078px;z-index:11;">Rolling back manager review change the status to 'In Progress'</div>
<div class="t" style="left:1069.00px;top:566.73px;font-size:14.52px;line-height:14.52px;color:#3d5073;font-weight:400;letter-spacing:0.101px;z-index:11;">for manager submissions. This allows managers to modify their</div>
<div class="t" style="left:1069.00px;top:590.73px;font-size:14.52px;line-height:14.52px;color:#3d5073;font-weight:400;letter-spacing:0.110px;z-index:11;">previous submission and resubmit. No data is lost. Manager</div>
<div class="t" style="left:1069.00px;top:615.23px;font-size:14.52px;line-height:14.52px;color:#3d5073;font-weight:400;letter-spacing:0.139px;z-index:11;">submissions will be visible to HR only after the manager</div>
<div class="t" style="left:1069.00px;top:640.43px;font-size:14.52px;line-height:14.52px;color:#3d5073;font-weight:400;letter-spacing:0.279px;z-index:11;">resubmits the modified review.</div>
<div class="t" style="left:1069.00px;top:670.53px;font-size:14.52px;line-height:14.52px;color:#3d5073;font-weight:400;letter-spacing:0.139px;z-index:11;">Are you sure you want to rollback?</div>
<div class="t" style="left:1098.90px;top:714.41px;font-size:13.12px;line-height:13.12px;color:#3d5073;font-weight:400;letter-spacing:0.436px;z-index:11;">Send Notification</div>
<div class="t" style="left:1255.90px;top:777.89px;font-size:14.57px;line-height:14.57px;color:#3577d6;font-weight:400;letter-spacing:0.125px;z-index:11;-webkit-text-stroke:0.2px #3577d6;">CANCEL</div>
<div class="t" style="left:1383.80px;top:777.89px;font-size:14.57px;line-height:14.57px;color:#fff;font-weight:700;letter-spacing:-0.412px;z-index:11;">ROLLBACK</div>
</body></html>
